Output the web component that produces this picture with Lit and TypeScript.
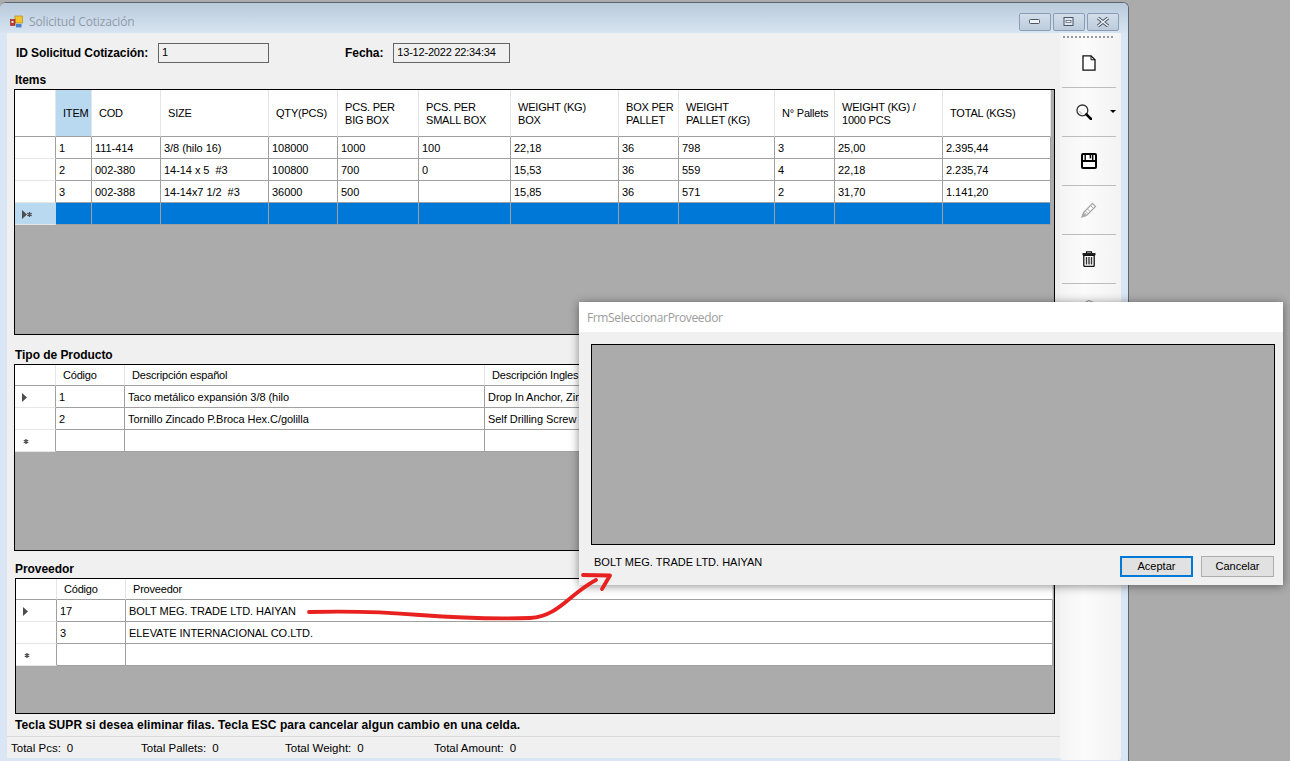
import { LitElement, html, css, svg, nothing } from "lit";
import { customElement, property } from "lit/decorators.js";

const tri = svg`<path d="M7 7 L12 11.5 L7 16 Z" fill="#4d4d4d" />`;
const star = (x: number) => svg`<path d="M${x} 9 v5 M${x - 2.2} 10.2 l4.4 2.6 M${x + 2.2} 10.2 l-4.4 2.6" stroke="#4d4d4d" stroke-width="1.3" fill="none" />`;

@customElement("grid-view")
export class GridView extends LitElement {
  @property({ type: Array }) cols: number[] = [];
  @property({ type: Array }) headers: string[][] = [];
  @property({ type: Array }) rows: string[][] = [];
  // one per row: "cur" current row, "new" new row, "both" both at once
  @property({ type: Array }) marks: string[] = [];
  @property({ type: Number }) selRow = -1;
  @property({ type: Number }) selCol = -1;
  @property({ type: Number }) headH = 21;

  static styles = css`
    :host {
      display: block;
      box-sizing: border-box;
      border: 1px solid #000;
      background: #ababab;
      overflow: hidden;
      font: 11px/13px "Liberation Sans", Arial, sans-serif;
      color: #000;
    }
    .row {
      display: grid;
      height: 22px;
    }
    .head {
      display: grid;
    }
    .hc {
      box-sizing: border-box;
      display: flex;
      flex-direction: column;
      justify-content: center;
      padding: 1px 0 0 7px;
      letter-spacing: -0.2px;
      background: #fff;
      border-right: 1px solid #e4e4e4;
      border-bottom: 1px solid #a0a0a0;
      white-space: nowrap;
      overflow: hidden;
    }
    .hc.sel {
      background: #b9d9f1;
    }
    .c {
      box-sizing: border-box;
      display: flex;
      align-items: center;
      padding: 1px 0 0 3px;
      letter-spacing: -0.05px;
      background: #fff;
      border-right: 1px solid #a0a0a0;
      border-bottom: 1px solid #a0a0a0;
      white-space: pre;
      overflow: hidden;
    }
    .rh {
      box-sizing: border-box;
      background: #fff;
      border-right: 1px solid #a0a0a0;
      border-bottom: 1px solid #e6e6e6;
    }
    .rh svg {
      display: block;
    }
    .row.sel .c {
      background: #0078d7;
    }
    .row.sel .rh {
      background: #b9d9f1;
      border-right-color: #b9d9f1;
    }
  `;

  marker(m: string) {
    if (!m) return nothing;
    return html`<svg width="40" height="21" viewBox="0 0 40 21">
      ${m === "cur" || m === "both" ? tri : nothing}
      ${m === "new" ? star(11) : nothing}
      ${m === "both" ? star(14.5) : nothing}
    </svg>`;
  }

  render() {
    const tpl = this.cols.map((c) => c + "px").join(" ");
    return html`
      <div class="head" style="grid-template-columns:${tpl};height:${this.headH}px">
        ${this.headers.map(
          (h, i) => html`<div class="hc ${i === this.selCol ? "sel" : ""}">
            ${h.map((l) => html`<div>${l}</div>`)}
          </div>`
        )}
      </div>
      ${this.rows.map(
        (r, ri) => html`<div class="row ${ri === this.selRow ? "sel" : ""}" style="grid-template-columns:${tpl}">
          <div class="rh">${this.marker(this.marks[ri])}</div>
          ${r.map((t) => html`<div class="c">${t}</div>`)}
        </div>`
      )}
    `;
  }
}

const icons = {
  doc: svg`<path d="M2 .8 h8 l4 4 V15.2 H2 Z" fill="#fff" stroke="#111" stroke-width="1.3" /><path d="M10 .8 V4.8 H14" fill="none" stroke="#111" stroke-width="1" />`,
  search: svg`<circle cx="6.4" cy="6.4" r="5.4" fill="#fdfdfd" stroke="#333" stroke-width="1.3" /><path d="M3.4 7 a3.6 3.6 0 0 0 3 2.6" fill="none" stroke="#aaa" /><path d="M10.4 10.4 L15 15" stroke="#000" stroke-width="2.6" stroke-linecap="round" />`,
  save: svg`<path d="M1 2 a1 1 0 0 1 1-1 H14 a1 1 0 0 1 1 1 V14 a1 1 0 0 1-1 1 H2 a1 1 0 0 1-1-1 Z" fill="#fff" stroke="#000" stroke-width="2" /><rect x="2" y="7" width="12" height="2" fill="#000" /><rect x="3.5" y="1" width="1.4" height="6" fill="#000" /><rect x="11" y="1" width="1.4" height="6" fill="#000" /><rect x="8.6" y="2" width="1.6" height="3.4" fill="#000" />`,
  pencil: svg`<path d="M1 15 L2.5 10.5 L11.5 1.5 L14.5 4.5 L5.5 13.5 Z" fill="#fff" stroke="#a8a8a8" stroke-width="1.3" /><path d="M3 10.5 L5.5 13 M4.5 9 L7 11.5 M6.5 7 L9 9.5 M9.5 3.5 L12.5 6.5" stroke="#a8a8a8" /><path d="M1 15 L2.5 10.5 L5.5 13.5 Z" fill="#a8a8a8" />`,
  trash: svg`<path d="M5.5 2 V.8 H10.5 V2" fill="none" stroke="#111" stroke-width="1.2" /><rect x="1.5" y="2" width="13" height="2.4" rx=".6" fill="#222" /><path d="M2.8 4.4 H13.2 V14.4 a1 1 0 0 1-1 1 H3.8 a1 1 0 0 1-1-1 Z" fill="#fff" stroke="#111" stroke-width="1.3" /><path d="M5.5 6 V13.6 M8 6 V13.6 M10.5 6 V13.6" stroke="#333" stroke-width="1.4" />`,
  mail: svg`<path d="M3 3 L8 0.5 L13 3 V15 H3 Z" fill="#fff" stroke="#a8a8a8" stroke-width="1.3" />`,
};

@customElement("app-root")
export class AppRoot extends LitElement {
  static styles = css`
    :host {
      display: block;
      position: relative;
      width: 1290px;
      height: 761px;
      overflow: hidden;
      background: #ababab;
      font: 11px/13px "Liberation Sans", Arial, sans-serif;
      color: #000;
    }
    .window {
      box-sizing: border-box;
      width: 1129px;
      height: 759px;
      margin-top: 2px;
      display: flex;
      flex-direction: column;
      background: #dae6f3;
      border-top: 1px solid #5d6670;
      border-right: 1px solid #5d6670;
      border-top-right-radius: 6px;
      border-top-left-radius: 6px;
    }
    .titlebar {
      box-sizing: border-box;
      flex: none;
      height: 30px;
      display: flex;
      align-items: center;
      padding: 7px 0 0 10px;
      background: linear-gradient(#b9cadb, #d7e4f2);
      border-top-right-radius: 5px;
      border-top-left-radius: 5px;
    }
    .appicon {
      display: block;
      margin-right: 6px;
    }
    .wintitle {
      flex: 1;
      font: 12px "Open Sans", sans-serif;
      letter-spacing: -0.15px;
      color: #8f9ba8;
    }
    .winbtns {
      display: flex;
      gap: 2px;
      margin-right: 9px;
    }
    .winbtn {
      box-sizing: border-box;
      width: 32px;
      height: 18px;
      display: flex;
      align-items: center;
      justify-content: center;
      border: 1px solid #8a9db5;
      border-radius: 2px;
      background: linear-gradient(#d3deea, #bccbdc);
    }
    .body {
      flex: 1;
      display: flex;
      min-height: 0;
    }
    .main {
      box-sizing: border-box;
      width: 1053px;
      margin-left: 7px;
      margin-bottom: 3px;
      background: #f0f0f0;
      display: flex;
      flex-direction: column;
      padding-left: 7px;
    }
    .idrow {
      display: flex;
      align-items: center;
      height: 20px;
      margin-top: 10px;
      font-size: 12px;
      font-weight: bold;
      letter-spacing: -0.08px;
      padding-left: 2px;
    }
    .field {
      box-sizing: border-box;
      height: 20px;
      border: 1px solid #646464;
      background: #f0f0f0;
      font-size: 11px;
      font-weight: normal;
      letter-spacing: -0.2px;
      padding: 2px 0 0 3px;
    }
    .f-id {
      width: 111px;
      margin-left: 10px;
    }
    .f-date {
      width: 117px;
      margin-left: 10px;
    }
    .l-date {
      margin-left: 76px;
    }
    .label {
      box-sizing: border-box;
      height: 16px;
      font-size: 12px;
      font-weight: bold;
      letter-spacing: -0.05px;
      padding: 1px 0 0 1px;
    }
    .l-items {
      margin-top: 10px;
    }
    .l-tipo {
      margin-top: 13px;
    }
    .l-prov {
      margin-top: 11px;
    }
    .g-items {
      width: 1041px;
      height: 246px;
    }
    .g-tipo {
      width: 1041px;
      height: 187px;
    }
    .g-prov {
      width: 1040px;
      height: 136px;
      margin-left: 1px;
    }
    .hint {
      height: 22px;
      display: flex;
      align-items: center;
      font-size: 12px;
      font-weight: bold;
      letter-spacing: 0.07px;
      padding-left: 1px;
    }
    .status {
      flex: 1;
      margin-left: -7px;
      border-top: 1px solid #d9d9d9;
      display: flex;
      align-items: center;
      padding-top: 1px;
      font-size: 11.5px;
    }
    .status > span {
      box-sizing: border-box;
      padding-left: 4px;
    }
    .status b {
      font-weight: normal;
      margin-left: 6px;
    }
    .s1 { width: 130px; }
    .s2 { width: 144px; }
    .s3 { width: 149px; }
    .toolbar {
      width: 61px;
      margin-bottom: 1px;
      background: linear-gradient(90deg, #f4f4f4, #fbfbfb 40%, #f3f3f3);
      border-radius: 0 0 3px 3px;
      display: flex;
      flex-direction: column;
    }
    .grip {
      flex: none;
      height: 6px;
      margin: 3px 6px 0 3px;
      background: radial-gradient(circle at 1px 1px, #9a9a9a 1px, transparent 1.2px) 0 0 / 4px 4px repeat-x;
    }
    .tbtn {
      position: relative;
      height: 49px;
      flex: none;
      box-sizing: border-box;
      margin: 0 5px 0 2px;
      border-bottom: 1px solid #bdbdbd;
      display: flex;
      align-items: center;
      justify-content: center;
    }
    .tbtn.first {
      height: 46px;
      padding-bottom: 4px;
    }
    .tbtn.drop svg {
      margin-right: 10px;
    }
    .tbtn.drop::after {
      content: "";
      position: absolute;
      right: 0;
      top: 22px;
      border-left: 3px solid transparent;
      border-right: 3px solid transparent;
      border-top: 3px solid #000;
    }
    .tbtn svg {
      display: block;
    }
    .modal {
      position: absolute;
      left: 579px;
      top: 302px;
      box-sizing: border-box;
      width: 704px;
      height: 283px;
      background: #f0f0f0;
      box-shadow: 0 1px 9px rgba(0, 0, 0, 0.45);
      display: flex;
      flex-direction: column;
    }
    .mtitle {
      height: 30px;
      flex: none;
      background: #fff;
      display: flex;
      align-items: center;
      padding-left: 8px;
      color: #9c9c9c;
      font: 12px "Open Sans", sans-serif;
      letter-spacing: -0.38px;
    }
    .mgrid {
      box-sizing: border-box;
      height: 201px;
      margin: 12px 8px 0 12px;
      border: 1px solid #000;
      background: #ababab;
    }
    .mfoot {
      display: flex;
      margin: 11px 9px 0 15px;
    }
    .mlabel {
      flex: 1;
    }
    .btn {
      box-sizing: border-box;
      width: 73px;
      height: 21px;
      margin-left: 8px;
      display: flex;
      align-items: center;
      justify-content: center;
      background: #e1e1e1;
      border: 1px solid #adadad;
    }
    .btn.def {
      border: 2px solid #0078d7;
    }
    .arrow {
      position: absolute;
      left: 0;
      top: 0;
      pointer-events: none;
    }
  `;

  itemCols = [41, 36, 69, 108, 69, 81, 92, 108, 60, 96, 60, 108, 108];
  itemHeads = [
    [""], ["ITEM"], ["COD"], ["SIZE"], ["QTY(PCS)"], ["PCS. PER", "BIG BOX"], ["PCS. PER", "SMALL BOX"],
    ["WEIGHT (KG)", "BOX"], ["BOX PER", "PALLET"], ["WEIGHT", "PALLET (KG)"], ["N° Pallets"],
    ["WEIGHT (KG) /", "1000 PCS"], ["TOTAL (KGS)"],
  ];
  itemRows = [
    ["1", "111-414", "3/8 (hilo 16)", "108000", "1000", "100", "22,18", "36", "798", "3", "25,00", "2.395,44"],
    ["2", "002-380", "14-14 x 5  #3", "100800", "700", "0", "15,53", "36", "559", "4", "22,18", "2.235,74"],
    ["3", "002-388", "14-14x7 1/2  #3", "36000", "500", "", "15,85", "36", "571", "2", "31,70", "1.141,20"],
    ["", "", "", "", "", "", "", "", "", "", "", ""],
  ];
  tipoRows = [
    ["1", "Taco metálico expansión 3/8 (hilo", "Drop In Anchor, Zinc Plated"],
    ["2", "Tornillo Zincado P.Broca Hex.C/golilla", "Self Drilling Screw Hex"],
    ["", "", ""],
  ];
  provRows = [
    ["17", "BOLT MEG. TRADE LTD. HAIYAN"],
    ["3", "ELEVATE INTERNACIONAL CO.LTD."],
    ["", ""],
  ];

  tool(icon: unknown, cls = "") {
    return html`<div class="tbtn ${cls}"><svg width="16" height="16" viewBox="0 0 16 16">${icon}</svg></div>`;
  }

  render() {
    return html`
      <div class="window">
        <div class="titlebar">
          <svg class="appicon" width="13" height="13" viewBox="0 0 13 13">
            <rect x="5" y="1" width="7.5" height="7" fill="#f4c430" stroke="#b08a20" stroke-width=".7" />
            <rect x="0.5" y="4.5" width="4.5" height="6" fill="#c8372d" stroke="#8a2a20" stroke-width=".6" />
            <rect x="6" y="9" width="5.5" height="3.4" fill="#4a80d0" />
            <rect x="1.5" y="6" width="2" height="2" fill="#eee" />
          </svg>
          <div class="wintitle">Solicitud Cotización</div>
          <div class="winbtns">
            <div class="winbtn"><svg width="12" height="6" viewBox="0 0 12 6"><rect x=".5" y=".5" width="10" height="4" rx="1" fill="#eef2f7" stroke="#4a5666" /></svg></div>
            <div class="winbtn"><svg width="12" height="10" viewBox="0 0 12 10"><rect x="1" y=".5" width="9" height="8" fill="#dfe6ef" stroke="#4a5666" /><rect x="3" y="3.5" width="5" height="2" fill="#fff" stroke="#4a5666" stroke-width=".7" /></svg></div>
            <div class="winbtn"><svg width="14" height="10" viewBox="0 0 14 10"><path d="M2 1 L12 9 M12 1 L2 9" stroke="#4a5666" stroke-width="3.4" /><path d="M2 1 L12 9 M12 1 L2 9" stroke="#f4f6f9" stroke-width="1.6" /></svg></div>
          </div>
        </div>
        <div class="body">
          <div class="main">
            <div class="idrow">
              <span>ID Solicitud Cotización:</span>
              <div class="field f-id">1</div>
              <span class="l-date">Fecha:</span>
              <div class="field f-date">13-12-2022 22:34:34</div>
            </div>
            <div class="label l-items">Items</div>
            <grid-view
              class="g-items"
              .cols=${this.itemCols}
              .headers=${this.itemHeads}
              .rows=${this.itemRows}
              .marks=${["", "", "", "both"]}
              .selRow=${3}
              .selCol=${1}
              .headH=${47}
            ></grid-view>
            <div class="label l-tipo">Tipo de Producto</div>
            <grid-view
              class="g-tipo"
              .cols=${[41, 69, 360, 567]}
              .headers=${[[""], ["Código"], ["Descripción español"], ["Descripción Ingles"]]}
              .rows=${this.tipoRows}
              .marks=${["cur", "", "new"]}
            ></grid-view>
            <div class="label l-prov">Proveedor</div>
            <grid-view
              class="g-prov"
              .cols=${[41, 69, 927]}
              .headers=${[[""], ["Código"], ["Proveedor"]]}
              .rows=${this.provRows}
              .marks=${["cur", "", "new"]}
            ></grid-view>
            <div class="hint">Tecla SUPR si desea eliminar filas. Tecla ESC para cancelar algun cambio en una celda.</div>
            <div class="status">
              <span class="s1">Total Pcs:<b>0</b></span>
              <span class="s2">Total Pallets:<b>0</b></span>
              <span class="s3">Total Weight:<b>0</b></span>
              <span>Total Amount:<b>0</b></span>
            </div>
          </div>
          <div class="toolbar">
            <div class="grip"></div>
            ${this.tool(icons.doc, "first")}
            ${this.tool(icons.search, "drop")}
            ${this.tool(icons.save)}
            ${this.tool(icons.pencil)}
            ${this.tool(icons.trash)}
            ${this.tool(icons.mail)}
          </div>
        </div>
      </div>

      <div class="modal">
        <div class="mtitle">FrmSeleccionarProveedor</div>
        <div class="mgrid"></div>
        <div class="mfoot">
          <div class="mlabel">BOLT MEG. TRADE LTD. HAIYAN</div>
          <div class="btn def">Aceptar</div>
          <div class="btn">Cancelar</div>
        </div>
      </div>

      <svg class="arrow" width="1290" height="761" viewBox="0 0 1290 761" fill="none" stroke="#e8201f" stroke-linecap="round" stroke-linejoin="round">
        <path d="M309 612 C345 611 385 612 420 615 C460 618 500 619 530 618 C552 617 565 602 578 592 C586 586 592 582 596 580" stroke-width="3.8" />
        <path d="M583 575 L610 575.5 L602 589" stroke-width="3.8" />
      </svg>
    `;
  }
}
